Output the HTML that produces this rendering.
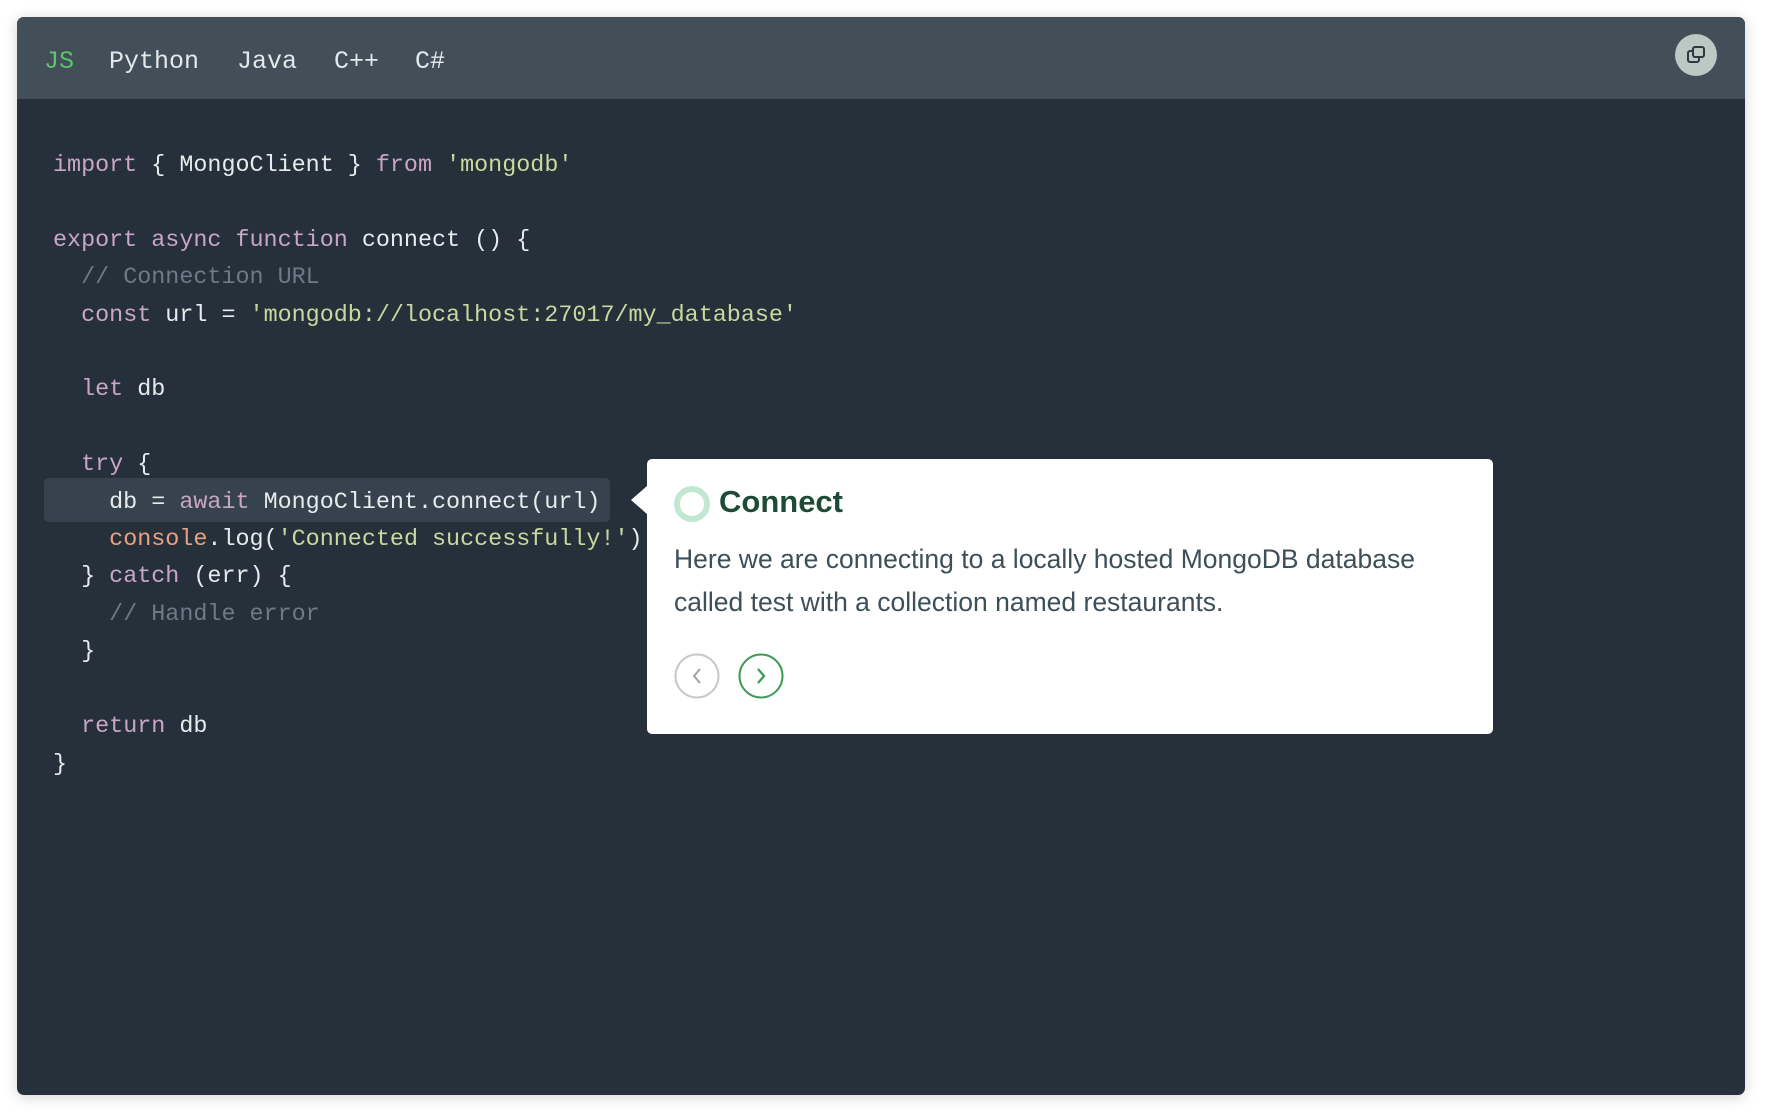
<!DOCTYPE html>
<html><head><meta charset="utf-8"><style>
body{margin:0;width:1768px;height:1114px;background:#fff;position:relative;overflow:hidden;font-family:"Liberation Sans",sans-serif}
.card{position:absolute;left:17px;top:17px;width:1728px;height:1078px;background:#25303a;border-radius:7px;overflow:hidden;box-shadow:0 2px 14px rgba(0,0,0,.18)}
.hdr{position:absolute;left:0;top:0;right:0;height:82px;background:#424f59}
.tab{position:absolute;top:30px;font-family:"Liberation Mono",monospace;font-size:25px;color:#e3e8ea}
.code{position:absolute;left:36px;top:131px;font-family:"Liberation Mono",monospace;font-size:23.4px;line-height:37.4px;color:#e6ecee;white-space:pre}
.k{color:#c9a5c7}.s{color:#c7d99e}.c{color:#6c7b85}.o{color:#eaa17f}
.hl{position:absolute;left:27px;top:461px;width:566px;height:44px;background:#36424d;border-radius:5px}
.pop{position:absolute;left:647px;top:459px;width:846px;height:275px;background:#fff;border-radius:5px}
.arr{position:absolute;left:631px;top:486px;width:0;height:0;border-top:14px solid transparent;border-bottom:14px solid transparent;border-right:16px solid #fff}
</style></head><body>
<div class="card">
<div class="hdr">
<span class="tab" style="left:27px;color:#5bc46c">JS</span>
<span class="tab" style="left:92px">Python</span>
<span class="tab" style="left:220px">Java</span>
<span class="tab" style="left:317px">C++</span>
<span class="tab" style="left:398px">C#</span>
<div style="position:absolute;left:1658px;top:17px;width:42px;height:42px;border-radius:50%;background:#bcc8c4"><svg width="42" height="42" viewBox="0 0 42 42"><rect x="13" y="17" width="11" height="11" rx="2" fill="none" stroke="#2c3a40" stroke-width="2"/><rect x="18" y="13" width="11" height="10" rx="2" fill="#bcc8c4" stroke="#2c3a40" stroke-width="2"/></svg></div>
</div>
<div class="hl"></div>
<div class="code"><span class="k">import</span> { MongoClient } <span class="k">from</span> <span class="s">'mongodb'</span>

<span class="k">export async function</span> connect () {
  <span class="c">// Connection URL</span>
  <span class="k">const</span> url = <span class="s">'mongodb://localhost:27017/my_database'</span>

  <span class="k">let</span> db

  <span class="k">try</span> {
    db = <span class="k">await</span> MongoClient.connect(url)
    <span class="o">console</span>.log(<span class="s">'Connected successfully!'</span>)
  } <span class="k">catch</span> (err) {
    <span class="c">// Handle error</span>
  }

  <span class="k">return</span> db
}</div>
</div>
<div class="arr"></div>
<div class="pop">
<div style="position:absolute;left:27px;top:27px;width:24px;height:24px;border:6px solid #c3e8d2;border-radius:50%"></div>
<div style="position:absolute;left:72px;top:25px;font-size:31px;font-weight:bold;color:#1e4b38">Connect</div>
<div style="position:absolute;left:27px;top:79px;width:800px;font-size:26.5px;line-height:43px;color:#3d4f58">Here we are connecting to a locally hosted MongoDB database called test with a collection named restaurants.</div>
<svg style="position:absolute;left:27px;top:193px" width="120" height="48" viewBox="0 0 120 48"><circle cx="23" cy="24" r="21.5" fill="none" stroke="#c4c9cb" stroke-width="2"/><path d="M26 17l-6 7 6 7" fill="none" stroke="#9aa3a7" stroke-width="2"/><circle cx="87" cy="24" r="21.5" fill="none" stroke="#3e9a56" stroke-width="2"/><path d="M84 17l6 7-6 7" fill="none" stroke="#3e9a56" stroke-width="2.3"/></svg>
</div>
</body></html>
